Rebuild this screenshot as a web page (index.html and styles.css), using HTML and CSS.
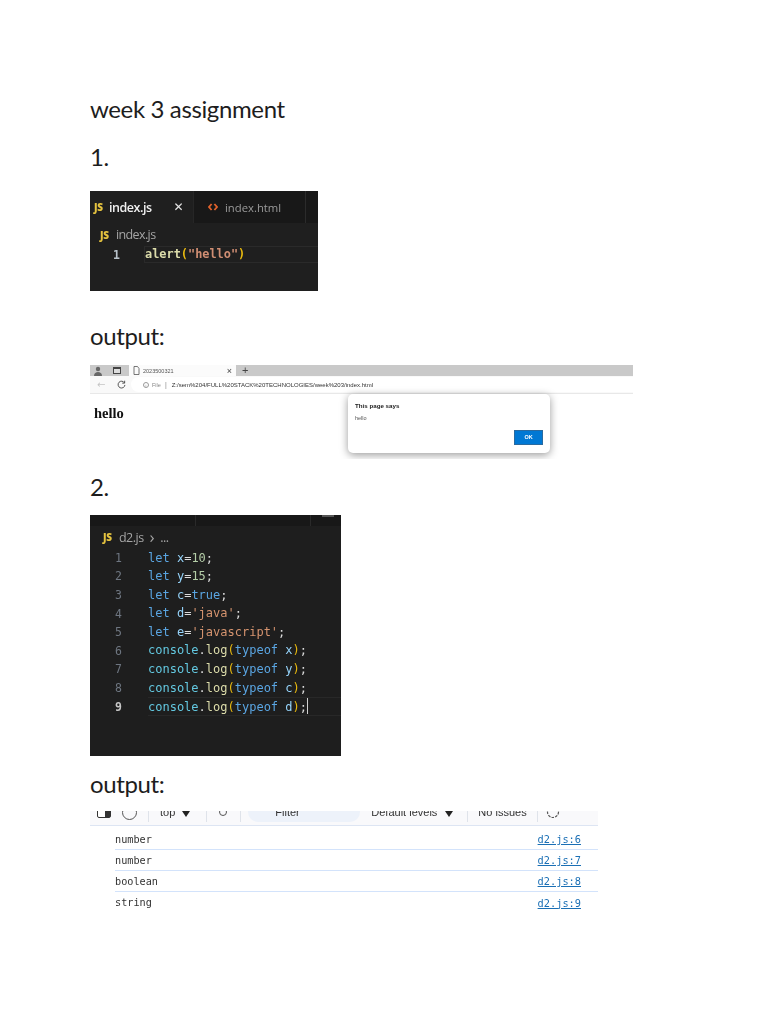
FILE: index.html
```html
<!DOCTYPE html>
<html lang="en">
<head>
<meta charset="utf-8">
<title>week 3 assignment</title>
<link rel="stylesheet" href="styles.css">
</head>
<body>
<main class="page">
  <h1 class="doc-line title">week 3 assignment</h1>
  <p class="doc-line num-one">1.</p>

  <section class="shot editor-one">
    <div class="tabs-one">
      <div class="tab-one active"><span class="js js-tab">JS</span><span class="tab-name">index.js</span><span class="tab-x">✕</span></div>
      <div class="tab-one second">
        <svg class="html-icon" viewBox="0 0 10 8" width="10" height="8"><path d="M3.6 1 1 4l2.6 3M6.4 1 9 4 6.4 7" fill="none" stroke="#e2622b" stroke-width="1.8"/></svg>
        <span class="tab-name dim">index.html</span>
      </div>
    </div>
    <div class="crumb-one"><span class="js js-crumb">JS</span><span>index.js</span></div>
    <div class="code-row-one">
      <span class="gutter-one">1</span>
      <code class="code-one"><span class="c-fn">alert</span><span class="c-br">(</span><span class="c-str">"hello"</span><span class="c-br">)</span></code>
    </div>
  </section>

  <p class="doc-line out-one">output:</p>

  <section class="shot browser">
    <div class="strip">
      <svg class="strip-icon profile" viewBox="0 0 10 10" width="10" height="10"><circle cx="5" cy="3" r="2.2" fill="#666"/><path d="M1 10c0-3 2-4 4-4s4 1 4 4z" fill="#666"/></svg>
      <span class="win-icon"></span>
      <div class="b-tab">
        <svg class="doc-icon" viewBox="0 0 7 9" width="7" height="9"><path d="M1 .5h3.500L6 2.500v6H1z" fill="none" stroke="#555" stroke-width=".8"/></svg>
        <span class="b-tab-name">2023500321</span>
        <span class="b-tab-x">×</span>
      </div>
      <span class="b-plus">+</span>
    </div>
    <div class="b-toolbar">
      <span class="b-back">←</span>
      <svg class="b-reload" viewBox="0 0 10 10" width="9" height="9"><path d="M8.300 3.200A3.800 3.800 0 1 0 8.800 5.500M8.500 .8v2.700H5.800" fill="none" stroke="#444" stroke-width="1"/></svg>
      <div class="url-pill">
        <span class="info">i</span><span class="file">File</span><span class="sep">|</span>
        <span class="url">Z:/sem%204/FULL%20STACK%20TECHNOLOGIES/week%203/index.html</span>
      </div>
    </div>
    <div class="b-body">
      <h2 class="hello">hello</h2>
      <div class="dialog">
        <strong class="d-title">This page says</strong>
        <span class="d-text">hello</span>
        <span class="d-ok">OK</span>
      </div>
    </div>
  </section>

  <p class="doc-line num-two">2.</p>

  <section class="shot editor-two">
    <div class="tabs-two"><span class="tab-cut first"></span><span class="tab-cut"></span><span class="tab-mark"></span></div>
    <div class="crumb-two"><span class="js js-crumb">JS</span><span>d2.js</span><span class="chev">›</span><span>...</span></div>
    <div class="code-two">
      <div class="ln"><span class="g">1</span><code><span class="k">let</span> <span class="v">x</span><span class="p">=</span><span class="n">10</span><span class="p">;</span></code></div>
      <div class="ln"><span class="g">2</span><code><span class="k">let</span> <span class="v">y</span><span class="p">=</span><span class="n">15</span><span class="p">;</span></code></div>
      <div class="ln"><span class="g">3</span><code><span class="k">let</span> <span class="v">c</span><span class="p">=</span><span class="k">true</span><span class="p">;</span></code></div>
      <div class="ln"><span class="g">4</span><code><span class="k">let</span> <span class="v">d</span><span class="p">=</span><span class="s">'java'</span><span class="p">;</span></code></div>
      <div class="ln"><span class="g">5</span><code><span class="k">let</span> <span class="v">e</span><span class="p">=</span><span class="s">'javascript'</span><span class="p">;</span></code></div>
      <div class="ln"><span class="g">6</span><code><span class="o">console</span><span class="p">.</span><span class="f">log</span><span class="b">(</span><span class="k">typeof</span> <span class="v">x</span><span class="b">)</span><span class="p">;</span></code></div>
      <div class="ln"><span class="g">7</span><code><span class="o">console</span><span class="p">.</span><span class="f">log</span><span class="b">(</span><span class="k">typeof</span> <span class="v">y</span><span class="b">)</span><span class="p">;</span></code></div>
      <div class="ln"><span class="g">8</span><code><span class="o">console</span><span class="p">.</span><span class="f">log</span><span class="b">(</span><span class="k">typeof</span> <span class="v">c</span><span class="b">)</span><span class="p">;</span></code></div>
      <div class="ln current"><span class="g">9</span><code><span class="o">console</span><span class="p">.</span><span class="f">log</span><span class="b">(</span><span class="k">typeof</span> <span class="v">d</span><span class="b">)</span><span class="p">;</span><span class="caret"></span></code></div>
    </div>
  </section>

  <p class="doc-line out-two">output:</p>

  <section class="shot devtools">
    <div class="dt-bar">
      <div class="dt-inner">
        <span class="dt-sidebar"></span>
        <span class="dt-clear"></span>
        <span class="dt-div d1"></span>
        <span class="dt-txt top">top</span><span class="dt-arrow a1"></span>
        <span class="dt-div d2"></span>
        <span class="dt-eye"></span>
        <span class="dt-div d3"></span>
        <span class="dt-filter"><span class="dt-txt">Filter</span></span>
        <span class="dt-txt levels">Default levels</span><span class="dt-arrow a2"></span>
        <span class="dt-div d4"></span>
        <span class="dt-txt issues">No issues</span>
        <span class="dt-div d5"></span>
        <svg class="dt-gear" viewBox="0 0 14 14" width="14" height="14"><circle cx="7" cy="7" r="5.500" fill="none" stroke="#555" stroke-width="1.200" stroke-dasharray="2.500 1.200"/></svg>
      </div>
    </div>
    <div class="logs">
      <div class="log"><span>number</span><a class="src">d2.js:6</a></div>
      <div class="log"><span>number</span><a class="src">d2.js:7</a></div>
      <div class="log"><span>boolean</span><a class="src">d2.js:8</a></div>
      <div class="log last"><span>string</span><a class="src">d2.js:9</a></div>
    </div>
  </section>
</main>
</body>
</html>
```

FILE: styles.css
```css
* { box-sizing: border-box; }
html, body { margin: 0; background: #fff; }
body { font-family: Lato, "Liberation Sans", sans-serif; color: #222; }
.page { width: 768px; height: 1024px; padding: 94px 0 0 90px; overflow: hidden; }

.doc-line { margin: 0; font-size: 24px; font-weight: 400; line-height: 30px; color: #1d1d1d; letter-spacing: -.37px; }
.num-one { margin-top: 18px; }
.out-one { margin-top: 30px; }
.num-two { margin-top: 13px; }
.out-two { margin-top: 13px; }

.shot { overflow: hidden; filter: blur(.35px); }
.editor-one { width: 228px; height: 100px; margin-top: 19px; background: #1f1f1f; }
.browser { width: 543px; height: 94px; margin-top: 14px; background: #fff; filter: blur(.55px); }
.editor-two { width: 251px; height: 241px; margin-top: 13px; background: #1e1e1e; }
.devtools { width: 508px; height: 114px; margin-top: 12px; background: #fff; }

/* shared editor bits */
.js { color: #e5c33f; font-weight: 800; font-family: "Open Sans", sans-serif; letter-spacing: -.2px; }
.js-tab { font-size: 10px; }
.js-crumb { font-size: 10px; }

/* editor one */
.tabs-one { display: flex; height: 32px; background: #181818; }
.tab-one { display: flex; align-items: center; height: 32px; }
.tab-one.active { width: 103px; padding-left: 4px; background: #1f1f1f; }
.tab-one.second { width: 113px; padding-left: 14px; border-right: 1px solid #2b2b2b; border-left: 1px solid #262626; }
.tab-name { font-family: "Open Sans", sans-serif; font-size: 12.500px; font-weight: 600; letter-spacing: -.45px; color: #f0f0f0; margin-left: 6px; }
.tab-name.dim { font-size: 11.300px; font-weight: 400; color: #9b9b9b; letter-spacing: 0; margin-left: 7px; }
.tab-x { margin-left: 22px; color: #e8e8e8; font-size: 12px; font-family: "DejaVu Sans", sans-serif; }
.crumb-one { display: flex; align-items: center; gap: 7px; height: 23px; padding-left: 10px; font-family: "Open Sans", sans-serif; font-size: 12.500px; letter-spacing: -.6px; color: #a4a4a4; }
.code-row-one { display: flex; align-items: center; height: 17px; }
.gutter-one { width: 54px; padding-left: 23px; font: 700 11.500px "DejaVu Sans Mono", monospace; color: #b9c3cb; }
.code-one { flex: 1; height: 17px; border: 1px solid #2a2a2a; border-right: 0; font: 700 11.900px/15px "DejaVu Sans Mono", monospace; }
.c-fn { color: #dcdcaa; }
.c-br { color: #e8b90f; }
.c-str { color: #d08e73; }

/* browser */
.strip { display: flex; align-items: center; height: 11px; background: #c9c9c9; overflow: hidden; }
.strip-icon { margin-left: 3px; }
.win-icon { width: 8px; height: 7px; margin-left: 10px; border: 1.500px solid #444; border-top-width: 2.500px; background: #ddd; }
.b-tab { display: flex; align-items: center; width: 107px; height: 11px; margin-left: 8px; padding-left: 4px; background: #fbfbfb; }
.b-tab-name { margin-left: 3px; font: 5.500px "Liberation Sans", sans-serif; color: #555; }
.b-tab-x { margin-left: auto; margin-right: 4px; font: 9px "Liberation Sans", sans-serif; color: #444; }
.b-plus { margin-left: 6px; font: 11px/11px "Liberation Sans", sans-serif; color: #444; }
.b-toolbar { display: flex; align-items: center; height: 18px; background: #f9f9f9; border-bottom: 1px solid #e8e8e8; }
.b-back { margin-left: 7px; width: 12px; font: 10px "DejaVu Sans", sans-serif; color: #c4c4c4; }
.b-reload { margin-left: 8px; }
.url-pill { display: flex; align-items: center; flex: 1; height: 15px; margin-left: 5px; padding-left: 12px; background: #fff; border-radius: 8px 0 0 8px; }
.info { width: 6px; height: 6px; border: .7px solid #999; border-radius: 50%; font: 4px/5px "Liberation Sans", sans-serif; color: #888; text-align: center; }
.file { margin-left: 3px; font: 5.500px "Liberation Sans", sans-serif; color: #888; }
.sep { margin-left: 4px; font: 7px "Liberation Sans", sans-serif; color: #888; }
.url { margin-left: 5px; font: 6px "Liberation Sans", sans-serif; color: #333; white-space: nowrap; }
.b-body { position: relative; height: 65px; }
.hello { margin: 0; padding: 10px 0 0 4px; font: 700 14.500px/18px "Liberation Serif", serif; color: #111; }
.dialog { position: absolute; left: 258px; top: 0; width: 202px; height: 59px; background: #fff; border-radius: 5px; box-shadow: 0 2px 8px rgba(0,0,0,.4); }
.d-title { position: absolute; left: 7px; top: 8px; font: 700 6.200px "Liberation Sans", sans-serif; color: #222; }
.d-text { position: absolute; left: 7px; top: 21px; font: 5.500px "Liberation Sans", sans-serif; color: #555; }
.d-ok { position: absolute; right: 7px; top: 36px; width: 29px; height: 15px; background: #0078d4; border: 1px solid #2a6a9f; color: #fff; font: 700 5.500px/13px "Liberation Sans", sans-serif; text-align: center; }

/* editor two */
.tabs-two { display: flex; height: 11px; background: #181818; }
.tab-cut { width: 115px; border-right: 1px solid #2a2a2a; }
.tab-cut.first { width: 106px; }
.tab-mark { width: 12px; height: 2px; margin-left: 11px; background: #555; }
.crumb-two { display: flex; align-items: center; gap: 5px; height: 22px; padding-left: 13px; font-family: "Open Sans", sans-serif; font-size: 12.500px; letter-spacing: -.5px; color: #a4a4a4; }
.crumb-two .js-crumb { margin-right: 2px; }
.chev { font-size: 17px; line-height: 18px; margin: 0 1px; }
.code-two { margin-top: -.5px; padding-top: 1px; }
.ln { display: flex; height: 18.600px; align-items: center; font: 12px/18px "DejaVu Sans Mono", monospace; }
.g { width: 58px; padding-left: 25px; color: #6e7681; font-size: 11.500px; }
.ln code { font: inherit; flex: 1; height: 18.600px; white-space: pre; }
.current .g { color: #c6c6c6; font-weight: 700; }
.current code { border: 1px solid #282828; border-width: 1px 0; line-height: 16.600px; }
.k { color: #5aa5e2; }
.v { color: #95d3fa; }
.p { color: #dcdcdc; }
.n { color: #b5cea8; }
.s { color: #d6946f; }
.o { color: #63c8e0; }
.f { color: #dcdcaa; }
.b { color: #e8b90f; }
.caret { display: inline-block; width: 1px; height: 16px; vertical-align: -3px; background: #d0d0d0; }

/* devtools */
.dt-bar { height: 15px; background: #f9f9fb; border-bottom: 1px solid #dde5f3; overflow: hidden; }
.dt-inner { display: flex; align-items: center; height: 20px; margin-top: -9px; padding-left: 7px; }
.dt-txt { font: 11px/14px "Liberation Sans", sans-serif; color: #333; white-space: nowrap; }
.dt-sidebar { width: 14px; height: 11px; border: 1.500px solid #333; border-radius: 2px; background: linear-gradient(90deg, #fff 55%, #333 55%); }
.dt-clear { width: 15px; height: 15px; margin-left: 11px; border: 1.200px solid #555; border-radius: 50%; }
.dt-div { width: 1px; height: 20px; background: #dfe3ea; }
.d1 { margin-left: 11px; }
.top { margin-left: 11px; }
.dt-arrow { width: 0; height: 0; margin-top: 3px; border: 4px solid transparent; border-top: 6px solid #222; border-bottom: 0; }
.a1 { margin-left: 7px; }
.d2 { margin-left: 16px; }
.dt-eye { width: 8px; height: 8px; margin-left: 12px; border: 1.200px solid #555; border-radius: 50%; }
.d3 { margin-left: 13px; }
.dt-filter { display: flex; width: 112px; height: 20px; align-items: center; margin-left: 7px; padding-left: 27px; background: #edf2fa; border-radius: 10px; }
.levels { margin-left: 11px; }
.a2 { margin-left: 8px; }
.d4 { margin-left: 14px; }
.issues { margin-left: 10px; }
.d5 { margin-left: 10px; }
.dt-gear { margin-left: 8px; }

.logs { padding-top: 3px; }
.log { display: flex; justify-content: space-between; align-items: center; height: 21px; margin-left: 25px; padding-right: 17px; border-bottom: 1px solid #d3e3fb; font: 10.200px "DejaVu Sans Mono", monospace; color: #333; }
.log.last { border-bottom: 0; }
.src { color: #1a6fb5; text-decoration: underline; font-size: 10.300px; }
```
